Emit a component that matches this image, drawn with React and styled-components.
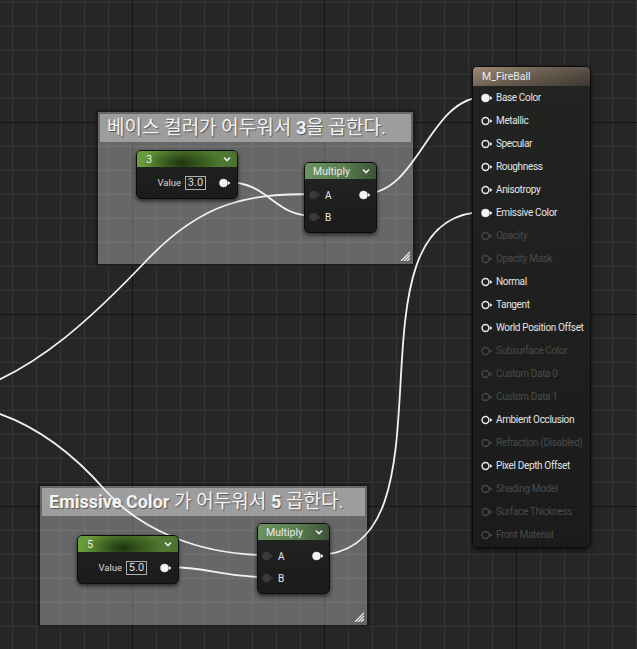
import styled, { createGlobalStyle } from 'styled-components';

const GlobalStyle = createGlobalStyle`
  html, body {
    margin: 0;
    padding: 0;
    background: #262626;
  }
  body {
    font-family: Roboto, "Noto Sans CJK KR", sans-serif;
  }
`;

const materialInputs = [
  { name: 'Base Color', pin: 'filled' },
  { name: 'Metallic', pin: 'ring' },
  { name: 'Specular', pin: 'ring' },
  { name: 'Roughness', pin: 'ring' },
  { name: 'Anisotropy', pin: 'ring' },
  { name: 'Emissive Color', pin: 'filled' },
  { name: 'Opacity', pin: 'dim' },
  { name: 'Opacity Mask', pin: 'dim' },
  { name: 'Normal', pin: 'ring' },
  { name: 'Tangent', pin: 'ring' },
  { name: 'World Position Offset', pin: 'ring' },
  { name: 'Subsurface Color', pin: 'dim' },
  { name: 'Custom Data 0', pin: 'dim' },
  { name: 'Custom Data 1', pin: 'dim' },
  { name: 'Ambient Occlusion', pin: 'ring' },
  { name: 'Refraction (Disabled)', pin: 'dim' },
  { name: 'Pixel Depth Offset', pin: 'ring' },
  { name: 'Shading Model', pin: 'dim' },
  { name: 'Surface Thickness', pin: 'dim' },
  { name: 'Front Material', pin: 'dim' },
];

const wires = [
  'M 226 182 C 270 182, 272 216, 314 216',
  'M -20 388 C 40 365, 90 320, 147 260 S 250 194, 314 194',
  'M 363 194 C 420 194, 428 97, 485 97',
  'M 316 555 C 466 555, 335 212, 485 212',
  'M -20 408 C 30 420, 70 450, 105 490 S 200 555, 267 555',
  'M 165 567 C 215 567, 215 577, 267 577',
];

const pinColors = {
  filled: { fill: '#f4f4f4', stroke: '#f4f4f4' },
  ring: { fill: 'none', stroke: '#e8e8e8' },
  dim: { fill: 'none', stroke: '#464646' },
  dark: { fill: '#3a3a3a', stroke: '#3a3a3a' },
};

const Pin = ({ kind = 'ring' }) => {
  const c = pinColors[kind];
  return (
    <PinIcon width="12" height="10" viewBox="0 0 12 10">
      <circle cx="4.5" cy="5" r={c.fill === 'none' ? 3.4 : 4} fill={c.fill} stroke={c.stroke} strokeWidth={c.fill === 'none' ? 1.5 : 0.5} />
      <polygon points="9,3 11.5,5 9,7" fill={c.stroke} />
    </PinIcon>
  );
};

const Chevron = () => (
  <svg width="8" height="6" viewBox="0 0 8 6">
    <polyline points="1,1.5 4,4.5 7,1.5" fill="none" stroke="#f0f0f0" strokeWidth="1.6" />
  </svg>
);

const Grip = () => (
  <GripIcon width="10" height="10" viewBox="0 0 10 10">
    <path d="M10 1 L1 10 M10 4 L4 10 M10 7 L7 10" stroke="#f4f4f4" strokeWidth="1.2" />
  </GripIcon>
);

const Comment = ({ x, y, w, h, children }) => (
  <CommentBox style={{ left: x, top: y, width: w, height: h }}>
    <CommentTitle>{children}</CommentTitle>
    <Grip />
  </CommentBox>
);

const ConstantNode = ({ x, y, title, value }) => (
  <NodeBox style={{ left: x, top: y }} $w={102}>
    <Header $kind="constant">
      <span>{title}</span>
      <Chevron />
    </Header>
    <ValueRow>
      <Label>Value</Label>
      <ValueField>{value}</ValueField>
      <Pin kind="filled" />
    </ValueRow>
  </NodeBox>
);

const MultiplyNode = ({ x, y }) => (
  <NodeBox style={{ left: x, top: y }} $w={73}>
    <Header $kind="math">
      <span>Multiply</span>
      <Chevron />
    </Header>
    <MathBody>
      <PinRow>
        <InputPin>
          <Pin kind="dark" />
          <PinLabel>A</PinLabel>
        </InputPin>
        <Pin kind="filled" />
      </PinRow>
      <PinRow>
        <InputPin>
          <Pin kind="dark" />
          <PinLabel>B</PinLabel>
        </InputPin>
      </PinRow>
    </MathBody>
  </NodeBox>
);

const MaterialNode = ({ x, y }) => (
  <NodeBox style={{ left: x, top: y }} $w={119}>
    <Header $kind="material">
      <span>M_FireBall</span>
    </Header>
    <MaterialBody>
      {materialInputs.map(input => (
        <MaterialRow key={input.name} $dim={input.pin === 'dim'}>
          <Pin kind={input.pin} />
          <span>{input.name}</span>
        </MaterialRow>
      ))}
    </MaterialBody>
  </NodeBox>
);

const App = () => {
  return (
    <>
      <GlobalStyle />
      <Canvas>
        <Comment x={97} y={111} w={317} h={154}>
          베이스 컬러가 어두워서 <b>3</b>을 곱한다.
        </Comment>
        <Comment x={39} y={485} w={329} h={141}>
          <b>Emissive Color</b> 가 어두워서 <b>5</b> 곱한다.
        </Comment>

        <Wires width="637" height="649" viewBox="0 0 637 649">
          {wires.map((d, i) => (
            <path key={i} d={d} fill="none" stroke="#f2f2f2" strokeWidth="1.8" />
          ))}
        </Wires>

        <ConstantNode x={136} y={150} title="3" value="3.0" />
        <MultiplyNode x={304} y={162} />
        <ConstantNode x={77} y={535} title="5" value="5.0" />
        <MultiplyNode x={257} y={523} />
        <MaterialNode x={472} y={66} />
      </Canvas>
    </>
  );
};

const Canvas = styled.div`
  position: relative;
  width: 637px;
  height: 649px;
  overflow: hidden;
  background-color: #262626;
  background-image:
    linear-gradient(to right, #141414 1px, transparent 1px),
    linear-gradient(to bottom, #141414 1px, transparent 1px),
    linear-gradient(to right, #353535 1px, transparent 1px),
    linear-gradient(to bottom, #353535 1px, transparent 1px);
  background-size: 192px 192px, 192px 192px, 24px 24px, 24px 24px;
  background-position: 132px 122px, 132px 122px, 12px 2px, 12px 2px;
`;

const CommentBox = styled.div`
  position: absolute;
  box-sizing: border-box;
  padding: 2px;
  background: rgba(255, 255, 255, 0.3);
  border: 1px solid #1c1c1c;
  box-shadow: 0 0 3px rgba(0, 0, 0, 0.7);
`;

const CommentTitle = styled.div`
  height: 28px;
  box-sizing: border-box;
  padding-left: 7px;
  background: #9d9d9d;
  color: #f3f3f3;
  font-size: 19px;
  line-height: 28px;
  white-space: nowrap;
  text-shadow: 1px 1px 1px rgba(0, 0, 0, 0.45);
  b {
    font-size: 18px;
    font-weight: 700;
  }
`;

const GripIcon = styled.svg`
  position: absolute;
  right: 3px;
  bottom: 3px;
`;

const Wires = styled.svg`
  position: absolute;
  left: 0;
  top: 0;
  pointer-events: none;
`;

const NodeBox = styled.div`
  position: absolute;
  width: ${p => p.$w}px;
  box-sizing: border-box;
  border: 1px solid #0b0b0b;
  border-radius: 5px;
  overflow: hidden;
  background: linear-gradient(to bottom, #222422, #1a1b1a);
  box-shadow: 0 2px 4px rgba(0, 0, 0, 0.65);
  color: #e2e2e2;
`;

const headerBackgrounds = {
  constant:
    'radial-gradient(ellipse 40% 110% at 45% 75%, rgba(24, 42, 12, 0.9), transparent), linear-gradient(to right, #6a9e3a, #5a8a32 45%, #4a7230)',
  math: 'linear-gradient(to right, #6c9461 0%, #587d4f 55%, #3e5439 100%)',
  material: 'linear-gradient(165deg, #a08b75 0%, #6c5f52 45%, #3c3631 100%)',
};

const Header = styled.div`
  height: ${p => (p.$kind === 'material' ? 19 : 16)}px;
  box-sizing: border-box;
  display: flex;
  align-items: center;
  justify-content: space-between;
  padding: 0 6px 0 ${p => (p.$kind === 'math' ? 8 : 9)}px;
  background: ${p => headerBackgrounds[p.$kind]};
  color: #ececec;
  font-size: ${p => (p.$kind === 'constant' ? 11 : 10.5)}px;
  white-space: nowrap;
`;

const PinIcon = styled.svg`
  flex: none;
  display: block;
`;

const ValueRow = styled.div`
  height: 31px;
  display: flex;
  align-items: center;
  justify-content: flex-end;
  padding-right: 6px;
`;

const Label = styled.span`
  font-size: 9.5px;
  color: #d6d6d6;
  margin-right: 4px;
`;

const ValueField = styled.span`
  width: 21px;
  height: 14px;
  box-sizing: border-box;
  border: 1px solid #b0b0b0;
  font-size: 11px;
  line-height: 12px;
  text-align: center;
  color: #dcdcdc;
  margin-right: 13px;
`;

const MathBody = styled.div`
  padding: 5px 5px 4px 4px;
`;

const PinRow = styled.div`
  height: 22px;
  display: flex;
  align-items: center;
  justify-content: space-between;
`;

const InputPin = styled.div`
  display: flex;
  align-items: center;
  gap: 4px;
`;

const PinLabel = styled.span`
  font-size: 10px;
  color: #e6e6e6;
`;

const MaterialBody = styled.div`
  padding: 0 0 1px 8px;
`;

const MaterialRow = styled.div`
  height: 23px;
  display: flex;
  align-items: center;
  gap: 3px;
  font-size: 10px;
  letter-spacing: -0.35px;
  white-space: nowrap;
  color: ${p => (p.$dim ? '#4a4a4a' : '#e4e4e4')};
`;

export default App;
